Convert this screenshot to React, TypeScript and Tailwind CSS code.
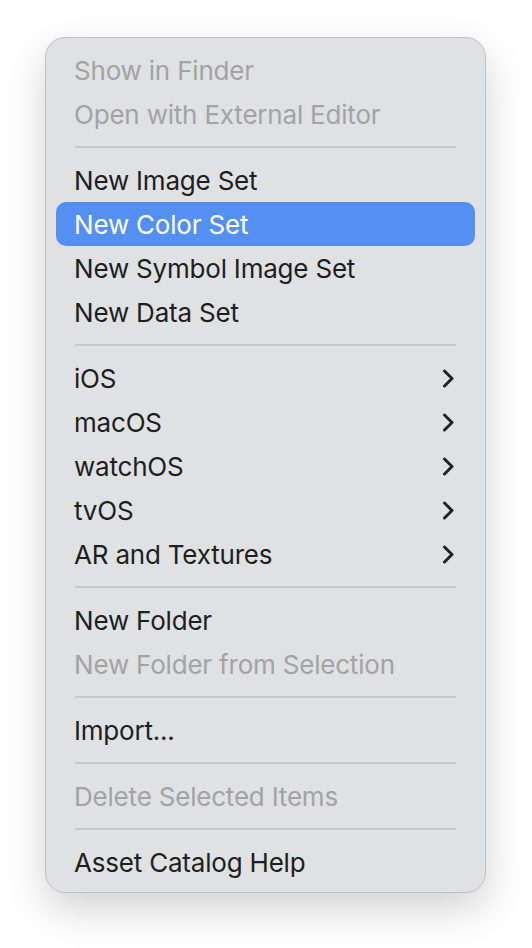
import React from "react";

type Item =
  | { type: "sep" }
  | { type: "item"; label: string; disabled?: boolean; selected?: boolean; submenu?: boolean };

const items: Item[] = [
  { type: "item", label: "Show in Finder", disabled: true },
  { type: "item", label: "Open with External Editor", disabled: true },
  { type: "sep" },
  { type: "item", label: "New Image Set" },
  { type: "item", label: "New Color Set", selected: true },
  { type: "item", label: "New Symbol Image Set" },
  { type: "item", label: "New Data Set" },
  { type: "sep" },
  { type: "item", label: "iOS", submenu: true },
  { type: "item", label: "macOS", submenu: true },
  { type: "item", label: "watchOS", submenu: true },
  { type: "item", label: "tvOS", submenu: true },
  { type: "item", label: "AR and Textures", submenu: true },
  { type: "sep" },
  { type: "item", label: "New Folder" },
  { type: "item", label: "New Folder from Selection", disabled: true },
  { type: "sep" },
  { type: "item", label: "Import..." },
  { type: "sep" },
  { type: "item", label: "Delete Selected Items", disabled: true },
  { type: "sep" },
  { type: "item", label: "Asset Catalog Help" },
];

function Chevron() {
  return (
    <svg width="13" height="19" viewBox="0 0 13 19" fill="none">
      <path d="M2.5 2 L10 9.5 L2.5 17" stroke="#222" strokeWidth="3" strokeLinecap="round" strokeLinejoin="round" />
    </svg>
  );
}

export default function App() {
  return (
    <div className="w-[532px] h-[948px] bg-white pt-[37px] pl-[45px]" style={{ fontFamily: "Inter, 'Liberation Sans', sans-serif" }}>
      <div className="w-[441px] rounded-[20px] bg-[#e0e1e3] border border-[#c2c2c4] pt-[10px] pb-[8px] px-[10px] shadow-[0_16px_40px_rgba(0,0,0,0.18)]">
        {items.map((it, i) =>
          it.type === "sep" ? (
            <div key={i} className="h-[22px] flex items-center px-[19px]">
              <div className="h-[2px] w-full bg-[#c9c9cb]" />
            </div>
          ) : (
            <div
              key={i}
              className={`h-[44px] flex items-center justify-between pl-[18px] pr-[20px] rounded-[10px] text-[26px] tracking-[-0.2px] ${
                it.selected ? "bg-[#5490f1] text-white" : it.disabled ? "text-[#a3a3a5]" : "text-[#1e1e1e]"
              }`}
            >
              <span>{it.label}</span>
              {it.submenu && <Chevron />}
            </div>
          )
        )}
      </div>
    </div>
  );
}
